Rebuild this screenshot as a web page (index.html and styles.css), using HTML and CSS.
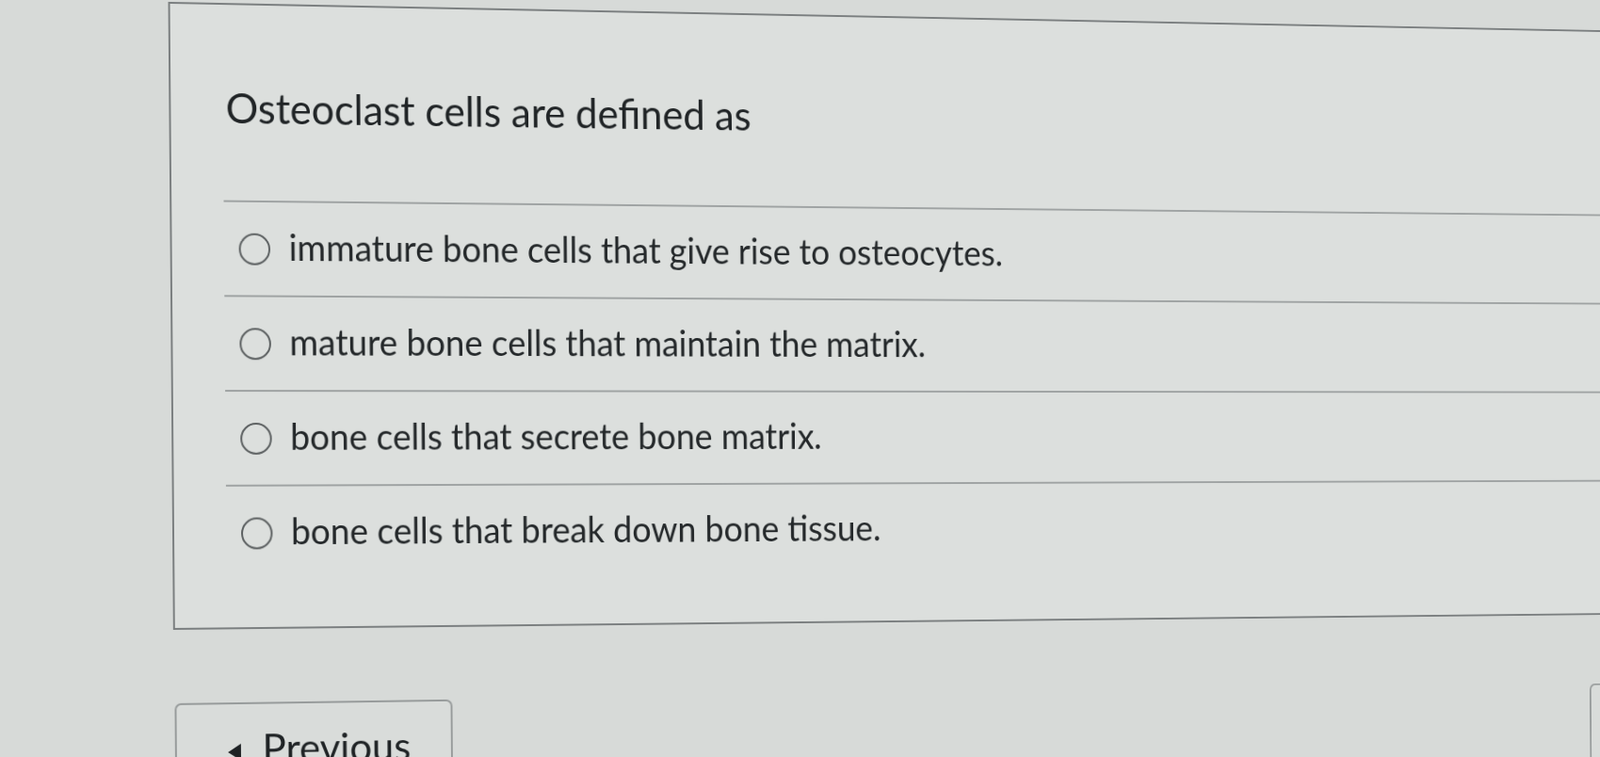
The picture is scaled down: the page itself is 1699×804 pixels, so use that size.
FILE: index.html
```html
<!DOCTYPE html>
<html lang="en">
<head>
<meta charset="utf-8">
<title>Quiz question</title>
<link rel="stylesheet" href="styles.css">
</head>
<body>
<div class="page">
  <section class="card">
    <h1 class="question">Osteoclast cells are defined as</h1>
    <div class="answers">
      <label class="answer"><span class="radio"></span><span class="answer-text">immature bone cells that give rise to osteocytes.</span></label>
      <label class="answer"><span class="radio"></span><span class="answer-text">mature bone cells that maintain the matrix.</span></label>
      <label class="answer"><span class="radio"></span><span class="answer-text">bone cells that secrete bone matrix.</span></label>
      <label class="answer last"><span class="radio"></span><span class="answer-text">bone cells that break down bone tissue.</span></label>
    </div>
  </section>
  <nav class="nav">
    <button class="btn btn-prev" type="button">
      <svg class="tri" width="16" height="20" viewBox="0 0 16 20"><path d="M15 1 L1 10 L15 19 Z" fill="#1e2224"/></svg>
      <span class="btn-label">Previous</span>
    </button>
    <button class="btn btn-next" type="button"><span class="btn-label">Next</span></button>
  </nav>
</div>
</body>
</html>
```

FILE: styles.css
```css
html, body {
  margin: 0;
  padding: 0;
  height: 100%;
  overflow: hidden;
  background: #d7dad8;
  font-family: Lato, "Open Sans", "Liberation Sans", sans-serif;
  color: #26292b;
}

/* slight keystone, as in the photographed screen */
.page {
  box-sizing: border-box;
  width: 2200px;
  padding: 2px 0 0 182px;
  transform-origin: 182px 438px;
  transform: perspective(3091px) rotateY(8deg) skewX(0.46deg);
}

.card {
  width: 1900px;
  box-sizing: border-box;
  background: #dcdfdd;
  border: 2px solid #7b7f80;
  border-right: none;
  padding: 83px 0 0 56px;
}

.question {
  margin: 0 0 0 3px;
  font-size: 44px;
  line-height: 52px;
  font-weight: 400;
  color: #202426;
}

.answers {
  margin-top: 73px;
}

.answer {
  display: flex;
  align-items: flex-start;
  border-top: 2px solid #9fa3a3;
  padding: 24px 0 29px 16px;
}

.answer.last {
  padding-bottom: 80px;
}

.radio {
  flex: none;
  width: 30px;
  height: 30px;
  margin-top: 9px;
  border: 2px solid #5c6061;
  border-radius: 50%;
}

.answer-text {
  margin-left: 20px;
  font-size: 38px;
  line-height: 46px;
  color: #24282a;
}

.nav {
  display: flex;
  justify-content: space-between;
  align-items: flex-start;
  width: 1810px;
  margin-top: 78px;
}

.btn {
  display: flex;
  align-items: flex-start;
  box-sizing: border-box;
  height: 100px;
  border: 2px solid #979b9b;
  border-radius: 7px;
  background: #d9dcda;
  font-family: Lato, "Open Sans", "Liberation Sans", sans-serif;
  color: #1f2325;
  font-size: 43px;
  padding: 0;
}

.btn-label {
  line-height: 52px;
  margin-top: 21px;
}

.btn-prev {
  margin-left: 1px;
  width: 302px;
  padding-left: 54px;
}

.btn-prev .tri {
  flex: none;
  margin-top: 41px;
}

.btn-prev .btn-label {
  margin-left: 22px;
}

.btn-next {
  width: 180px;
  padding-left: 60px;
}
```
